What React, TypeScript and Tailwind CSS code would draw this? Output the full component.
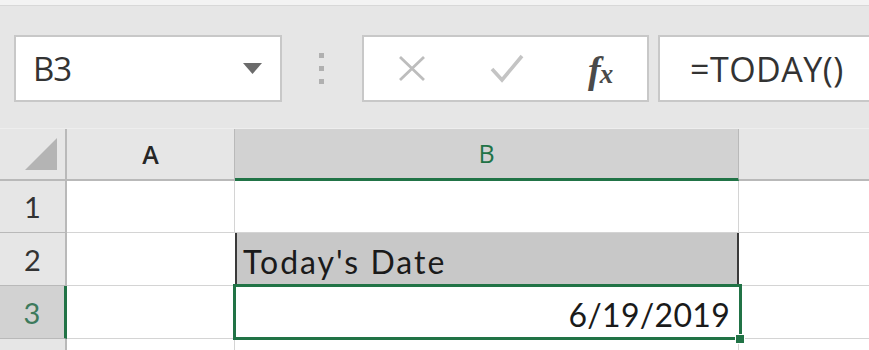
import React from 'react';

// Excel-style name box + formula bar + small sheet
const ui = '"Open Sans", "Liberation Sans", sans-serif';
const cell = 'Lato, "Liberation Sans", sans-serif';

export default function App() {
  return (
    <div className="w-[869px] h-[350px] overflow-hidden bg-[#e6e6e6]" style={{ fontFamily: ui }}>
      {/* top strip */}
      <div className="h-[6px] bg-[#f3f3f3] border-b border-[#d8d8d8]" />

      {/* formula bar */}
      <div className="flex items-center mt-[29px] h-[67px]">
        <div className="ml-[14px] w-[268px] h-full bg-white border-2 border-[#c8c8c8] flex items-center justify-between pl-[17px] pr-[18px]">
          <span className="text-[33px] leading-none text-[#333] tracking-[-1px]">B3</span>
          <svg width="19" height="11" viewBox="0 0 19 11">
            <polygon points="0,0 19,0 9.5,11" fill="#6b6b6b" />
          </svg>
        </div>
        <div className="w-[78px] flex flex-col items-center gap-[8px]">
          <div className="w-[5px] h-[5px] bg-[#b0b0b0]" />
          <div className="w-[5px] h-[5px] bg-[#b0b0b0]" />
          <div className="w-[5px] h-[5px] bg-[#b0b0b0]" />
        </div>
        <div className="ml-[2px] w-[287px] h-full bg-white border-2 border-[#c8c8c8] flex items-center">
          <svg className="ml-[33px]" width="30" height="27" viewBox="0 0 30 27">
            <path d="M3 2 L27 25 M27 2 L3 25" stroke="#bdbdbd" strokeWidth="2.8" fill="none" />
          </svg>
          <svg className="ml-[63px]" width="34" height="29" viewBox="0 0 34 29">
            <path d="M2 15 L12 26 L32 2" stroke="#c4c4c4" strokeWidth="3.6" fill="none" />
          </svg>
          <span
            className="ml-[64px] mt-[2px] text-[38px] leading-none italic font-semibold text-[#4a4a4a] tracking-[-1px]"
            style={{ fontFamily: '"Liberation Serif", serif' }}
          >
            f<span className="text-[27px]">x</span>
          </span>
        </div>
        <div className="ml-[9px] flex-1 h-full bg-white border-y-2 border-l-2 border-[#c8c8c8] flex items-center pl-[30px]">
          <span className="text-[34px] leading-none text-[#333] tracking-[0.5px]">=TODAY()</span>
        </div>
      </div>

      {/* sheet */}
      <div
        className="mt-[26px] border-t border-[#eeeeee] grid grid-cols-[67px_168px_504px_1fr] grid-rows-[52px_52px_53px_53px_40px] bg-white"
        style={{ fontFamily: cell }}
      >
        {/* header row */}
        <div className="bg-[#e6e6e6] border-r-2 border-b-2 border-[#b9b9b9] flex items-center justify-end pr-[8px]">
          <svg width="32" height="32" viewBox="0 0 32 32">
            <polygon points="32,0 32,32 0,32" fill="#b4b4b4" />
          </svg>
        </div>
        <div className="bg-[#e6e6e6] border-r border-b-2 border-[#b9b9b9] flex items-center justify-center">
          <span className="text-[25px] leading-none text-[#262626] font-semibold" style={{ fontFamily: ui }}>A</span>
        </div>
        <div className="bg-[#d2d2d2] border-r border-[#b9b9b9] border-b-[3px] border-b-[#217346] flex items-center justify-center">
          <span className="text-[25px] leading-none text-[#217346]" style={{ fontFamily: ui }}>B</span>
        </div>
        <div className="bg-[#e6e6e6] border-b-2 border-[#b9b9b9]" />

        {/* row 1 */}
        <div className="bg-[#e6e6e6] border-r-2 border-b border-[#b9b9b9] flex items-center justify-center">
          <span className="text-[29px] leading-none text-[#333]">1</span>
        </div>
        <div className="border-r border-b border-[#d4d4d4]" />
        <div className="border-r border-b border-[#d4d4d4]" />
        <div className="border-b border-[#d4d4d4]" />

        {/* row 2 */}
        <div className="bg-[#e6e6e6] border-r-2 border-b border-[#b9b9b9] flex items-center justify-center">
          <span className="text-[29px] leading-none text-[#333]">2</span>
        </div>
        <div className="border-b border-[#d4d4d4]" />
        <div className="bg-[#c8c8c8] border-l-2 border-r-2 border-[#3a3a3a] flex items-center pl-[6px] pt-[4px]">
          <span className="text-[32px] leading-none text-[#1a1a1a] tracking-[2px]">Today's Date</span>
        </div>
        <div className="border-b border-[#d4d4d4]" />

        {/* row 3 */}
        <div className="bg-[#d2d2d2] border-r-[3px] border-r-[#217346] border-b border-[#b9b9b9] flex items-center justify-center">
          <span className="text-[29px] leading-none text-[#3d7a5c]">3</span>
        </div>
        <div className="border-r border-b border-[#d4d4d4]" />
        <div className="relative flex items-center justify-end pr-[9px] pt-[4px]">
          <div className="absolute -left-[2px] -right-[3px] -top-[2px] -bottom-[1px] border-[3px] border-[#217346]" />
          <div className="absolute -right-[6px] -bottom-[5px] w-[10px] h-[10px] bg-[#217346] border border-white" />
          <span className="text-[32px] leading-none text-[#1a1a1a] tracking-[0.3px]">6/19/2019</span>
        </div>
        <div className="border-b border-[#d4d4d4]" />

        {/* row 4 */}
        <div className="bg-[#e6e6e6] border-r-2 border-[#b9b9b9]" />
        <div className="border-r border-[#d4d4d4]" />
        <div className="border-r border-[#d4d4d4]" />
        <div />
      </div>
    </div>
  );
}
